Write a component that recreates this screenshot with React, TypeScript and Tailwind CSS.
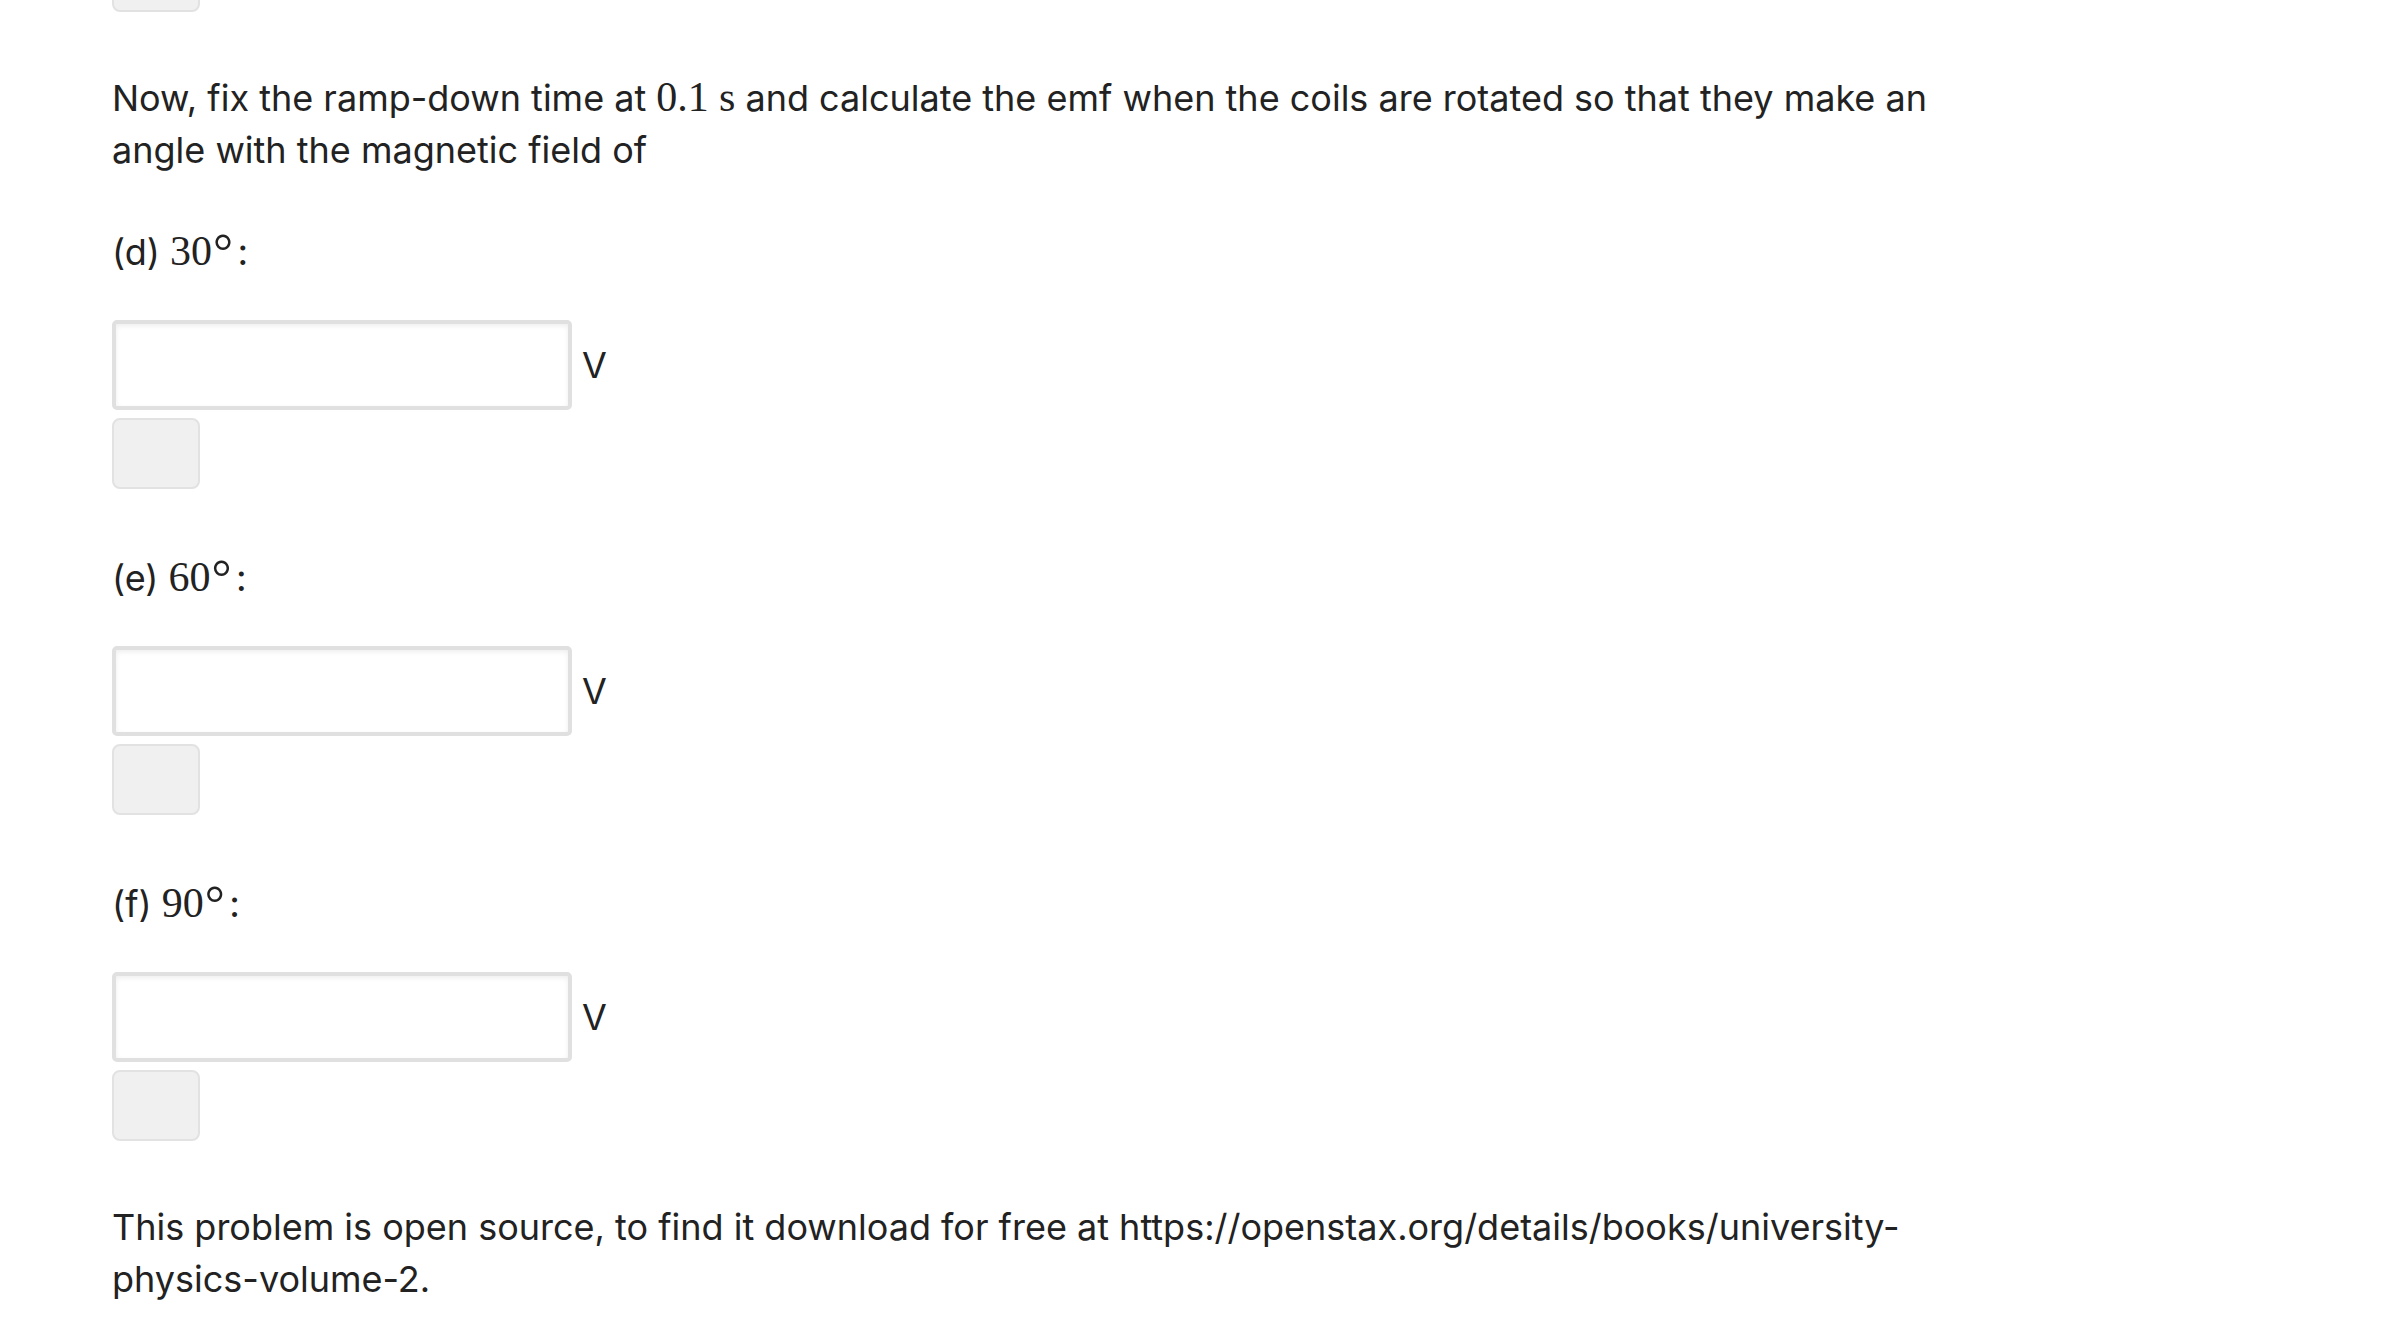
import React from 'react';

const PARTS = [
  { id: 'd', angle: '30' },
  { id: 'e', angle: '60' },
  { id: 'f', angle: '90' },
];

// KaTeX-ish inline math, a bit larger than body text
function M({ children }: { children: React.ReactNode }) {
  return <span className="font-['Liberation_Serif',serif] text-[42px] leading-none">{children}</span>;
}

function CheckButton() {
  return (
    <button
      type="button"
      className="block w-[88px] h-[71px] rounded-[8px] border-2 border-[#e2e2e2] bg-[#f0f0f0]"
    />
  );
}

function AnswerPart({ id, angle, first }: { id: string; angle: string; first?: boolean }) {
  return (
    <div className={first ? 'mt-[47px]' : 'mt-[60px]'}>
      <p>
        ({id}){' '}
        <M>
          {angle}
          <span className="relative top-[3px] ml-[1px] text-[50px] leading-none">°</span>
          <span className="ml-[4px]">:</span>
        </M>
      </p>
      <div className="mt-[42px] flex items-center">
        <input
          type="text"
          className="w-[460px] h-[90px] rounded-[5px] border-4 border-[#e0e0e0] bg-white shadow-[inset_0_2px_5px_rgba(0,0,0,0.07)] outline-none"
        />
        <span className="ml-[10px]">V</span>
      </div>
      <div className="mt-[8px]">
        <CheckButton />
      </div>
    </div>
  );
}

export default function App() {
  return (
    <div className="min-h-screen bg-white px-[112px] font-['Inter',sans-serif] text-[36px] leading-[52px] text-[#222]">
      {/* tail of the previous part's button */}
      <div className="-mt-[59px]">
        <CheckButton />
      </div>

      <p className="mt-[60px] w-[1880px]">
        Now, fix the ramp-down time at <M>0.1</M> <M>s</M> and calculate the emf when the coils are
        rotated so that they make an angle with the magnetic field of
      </p>

      {PARTS.map((p, i) => (
        <AnswerPart key={p.id} id={p.id} angle={p.angle} first={i === 0} />
      ))}

      <p className="mt-[60px] w-[1880px]">
        This problem is open source, to find it download for free at
        https://openstax.org/details/books/university-physics-volume-2.
      </p>
    </div>
  );
}
